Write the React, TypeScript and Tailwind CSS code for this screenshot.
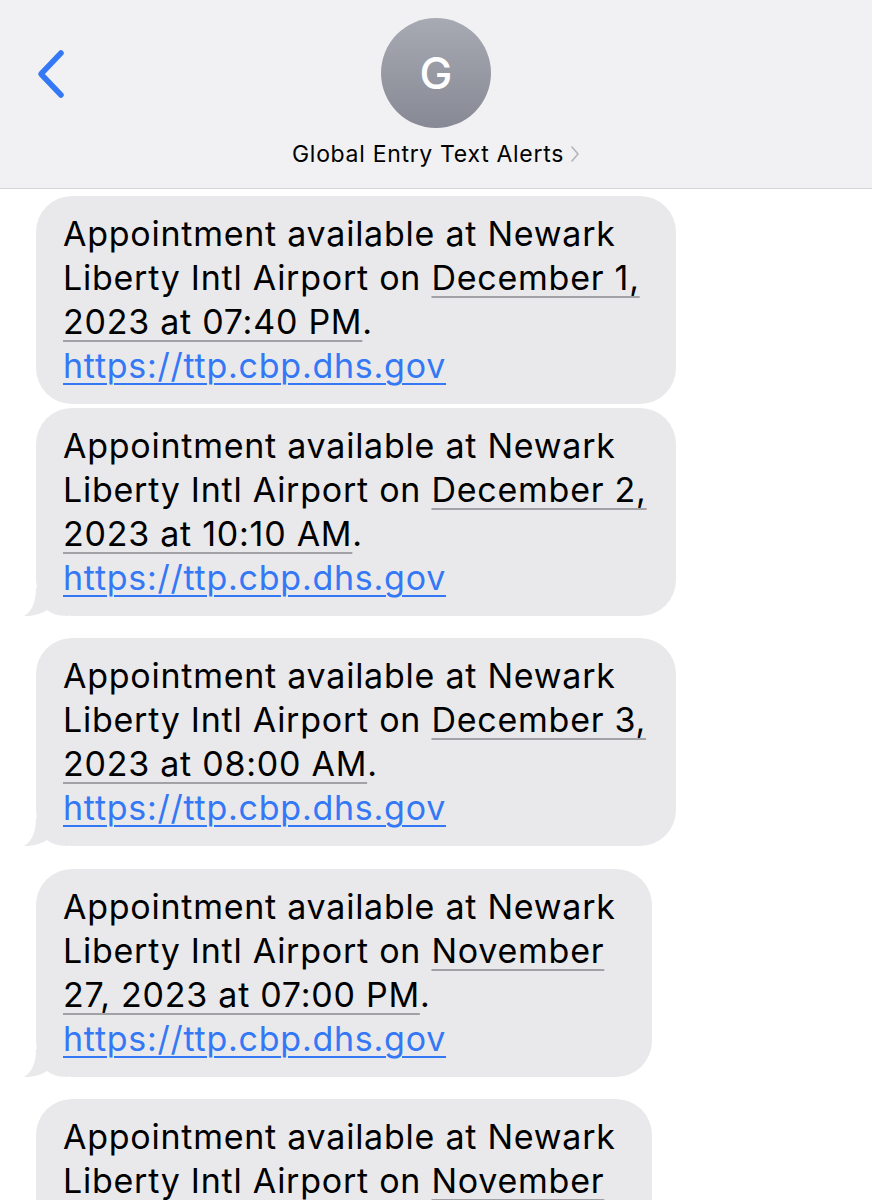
import React from "react";

interface Msg {
  dateA: string;
  dateB: string;
  width: string;
  tail: boolean;
  gap: string;
}

const MESSAGES: Msg[] = [
  { dateA: "December 1,", dateB: "2023 at 07:40 PM", width: "w-[640px]", tail: false, gap: "mt-[7px]" },
  { dateA: "December 2,", dateB: "2023 at 10:10 AM", width: "w-[640px]", tail: true, gap: "mt-[4px]" },
  { dateA: "December 3,", dateB: "2023 at 08:00 AM", width: "w-[640px]", tail: true, gap: "mt-[22px]" },
  { dateA: "November", dateB: "27, 2023 at 07:00 PM", width: "w-[616px]", tail: true, gap: "mt-[23px]" },
  { dateA: "November", dateB: "28, 2023 at 09:20 AM", width: "w-[616px]", tail: true, gap: "mt-[22px]" },
];

const dateCls =
  "underline decoration-[#a1a1a6] decoration-2 underline-offset-[6px]";

function Bubble({ m }: { m: Msg }) {
  return (
    <div className={`relative ${m.gap} ${m.width}`}>
      {m.tail && (
        <svg
          className="absolute left-[-12px] bottom-0"
          width="44"
          height="28"
          viewBox="0 0 44 28"
        >
          <path
            d="M12 0 C12 14 8 23 0 28 C9 28.5 17 26 23 22 C27 25 33 28 44 28 L44 0 Z"
            fill="#e9e9eb"
          />
        </svg>
      )}
      <div className="relative whitespace-nowrap rounded-[36px] bg-[#e9e9eb] pl-[27px] pr-[20px] py-[16px] text-[34px] leading-[44px] tracking-[0.022em] text-black">
        <div>Appointment available at Newark</div>
        <div>
          Liberty Intl Airport on <span className={dateCls}>{m.dateA}</span>
        </div>
        <div>
          <span className={dateCls}>{m.dateB}</span>.
        </div>
        <div className="text-[#3478f6] underline decoration-2 underline-offset-[5px]">
          https://ttp.cbp.dhs.gov
        </div>
      </div>
    </div>
  );
}

export default function App() {
  return (
    <div
      className="h-[1200px] w-[872px] overflow-hidden bg-white"
      style={{ fontFamily: "Inter, 'Liberation Sans', sans-serif" }}
    >
      <div className="relative h-[189px] border-b border-[#d3d3d8] bg-[#f1f1f3]">
        <svg
          className="absolute left-[34px] top-[48px]"
          width="34"
          height="52"
          viewBox="0 0 34 52"
        >
          <path
            d="M27 5 L7 26 L27 47"
            fill="none"
            stroke="#3478f6"
            strokeWidth="5.5"
            strokeLinecap="round"
            strokeLinejoin="round"
          />
        </svg>
        <div className="flex flex-col items-center pt-[18px]">
          <div className="flex h-[110px] w-[110px] items-center justify-center rounded-full bg-gradient-to-b from-[#a7aab3] to-[#878a94] text-[44px] font-medium text-white">
            G
          </div>
          <div className="mt-[11px] flex items-center text-[23px] leading-[30px] tracking-[0.03em] text-black">
            <span>Global Entry Text Alerts</span>
            <svg className="ml-[6px]" width="10" height="18" viewBox="0 0 10 18">
              <path
                d="M2 2 L8 9 L2 16"
                fill="none"
                stroke="#b4b4b9"
                strokeWidth="1.6"
                strokeLinecap="round"
                strokeLinejoin="round"
              />
            </svg>
          </div>
        </div>
      </div>
      <div className="flex flex-col pl-[36px]">
        {MESSAGES.map((m, i) => (
          <Bubble key={i} m={m} />
        ))}
      </div>
    </div>
  );
}
